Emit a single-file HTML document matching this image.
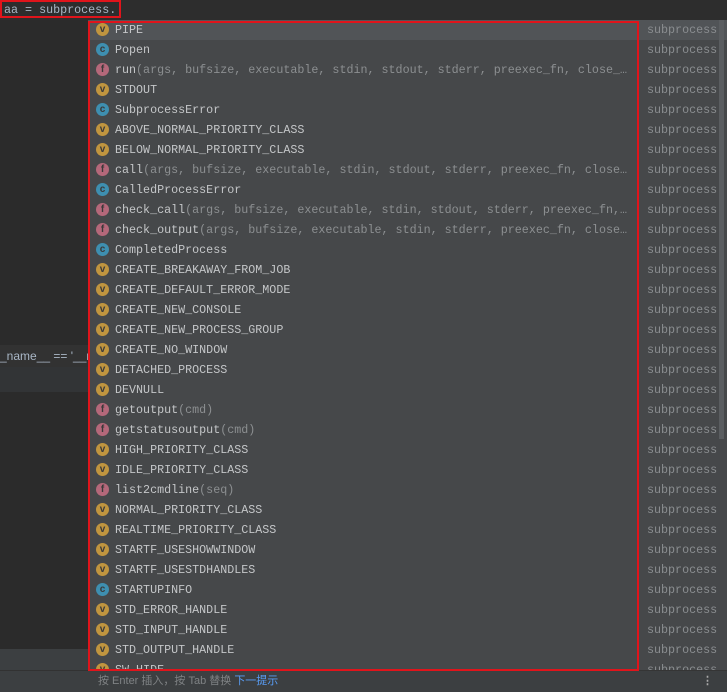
<!DOCTYPE html><html><head><style>
body{margin:0;width:727px;height:692px;background:#2b2b2b;position:relative;overflow:hidden;font-family:"Liberation Mono",monospace;font-size:11.7px}
.abs{position:absolute}
#pop{left:88px;top:20px;width:639px;height:650px;background:#46484a;overflow:hidden}
.row{position:absolute;left:0;width:639px;height:20px;line-height:21px;color:#c4c6c8;white-space:nowrap}
.row .n{position:absolute;left:27px}
.row .p{color:#8c8f91}
.row .s{position:absolute;left:559px;color:#8a8d90}
.ic{position:absolute;left:8px;top:3px;width:13px;height:13px;border-radius:50%;font:bold 10px "Liberation Sans",sans-serif;text-align:center;line-height:13px;color:#3a3a3a}
.v{background:#c0953f}.c{background:#3e8fb0}.f{background:#b4687a}
</style></head><body>
<div class="abs" style="left:0;top:0;width:727px;height:20px;background:#2d2d2d"></div>
<div class="abs" style="left:4px;top:2px;color:#a9b7c6;line-height:16px">aa = subprocess.</div>
<div class="abs" style="left:0;top:0;width:121px;height:18px;border:2px solid #e0141b;box-sizing:border-box"></div>
<div class="abs" style="left:0;top:345px;width:88px;height:22px;background:#323232;color:#a9b7c6;line-height:22px;font-family:'Liberation Sans',sans-serif;font-size:12px;white-space:nowrap;overflow:hidden">_name__ == '__m</div>
<div class="abs" style="left:0;top:367px;width:88px;height:25px;background:#323436"></div>
<div class="abs" style="left:0;top:649px;width:88px;height:43px;background:#3c3f41"></div>
<div class="abs" style="left:0;top:670px;width:88px;height:1px;background:#323232"></div>
<div id="pop" class="abs">
<div class="abs" style="left:0;top:0;width:639px;height:20px;background:#515457"></div>
<div id="rows"></div>
<div class="abs" style="left:631px;top:-4px;width:5px;height:423px;background:#5a5d60"></div>
</div>
<div class="abs" style="left:88px;top:670px;width:639px;height:22px;background:#3c3f41;border-top:1px solid #353535;box-sizing:border-box;font-family:'Liberation Sans','Noto Sans CJK SC',sans-serif;font-size:11px;line-height:20px;color:#7f8284"><span style="margin-left:10px">按 Enter 插入，按 Tab 替换 </span><span style="color:#589df6">下一提示</span><span style="position:absolute;left:614px;top:0;color:#aaa;font-weight:bold">⋮</span></div>
<div class="abs" style="left:88px;top:21px;width:551px;height:650px;border:2px solid #e0141b;box-sizing:border-box"></div>
<script>
var d=[["v","PIPE",""],["c","Popen",""],["f","run","(args, bufsize, executable, stdin, stdout, stderr, preexec_fn, close_…"],["v","STDOUT",""],["c","SubprocessError",""],["v","ABOVE_NORMAL_PRIORITY_CLASS",""],["v","BELOW_NORMAL_PRIORITY_CLASS",""],["f","call","(args, bufsize, executable, stdin, stdout, stderr, preexec_fn, close…"],["c","CalledProcessError",""],["f","check_call","(args, bufsize, executable, stdin, stdout, stderr, preexec_fn,…"],["f","check_output","(args, bufsize, executable, stdin, stderr, preexec_fn, close…"],["c","CompletedProcess",""],["v","CREATE_BREAKAWAY_FROM_JOB",""],["v","CREATE_DEFAULT_ERROR_MODE",""],["v","CREATE_NEW_CONSOLE",""],["v","CREATE_NEW_PROCESS_GROUP",""],["v","CREATE_NO_WINDOW",""],["v","DETACHED_PROCESS",""],["v","DEVNULL",""],["f","getoutput","(cmd)"],["f","getstatusoutput","(cmd)"],["v","HIGH_PRIORITY_CLASS",""],["v","IDLE_PRIORITY_CLASS",""],["f","list2cmdline","(seq)"],["v","NORMAL_PRIORITY_CLASS",""],["v","REALTIME_PRIORITY_CLASS",""],["v","STARTF_USESHOWWINDOW",""],["v","STARTF_USESTDHANDLES",""],["c","STARTUPINFO",""],["v","STD_ERROR_HANDLE",""],["v","STD_INPUT_HANDLE",""],["v","STD_OUTPUT_HANDLE",""],["v","SW_HIDE",""]];
var h="";d.forEach(function(r,i){h+='<div class="row" style="top:'+(i*20)+'px"><span class="ic '+r[0]+'">'+(r[0]=="c"?"c":r[0]=="f"?"f":"v")+'</span><span class="n">'+r[1]+'<span class="p">'+r[2]+'</span></span><span class="s">subprocess</span></div>'});
document.getElementById("rows").innerHTML=h;
</script>
</body></html>
